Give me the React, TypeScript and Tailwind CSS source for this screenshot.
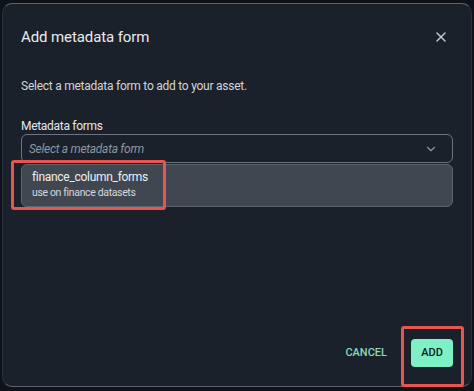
import { X, ChevronDown } from 'lucide-react';

export default function App() {
  return (
    <div className="w-[474px] h-[391px] bg-[#0f1319] pt-[3px] px-[2px] pb-[4px]" style={{ fontFamily: 'Roboto, Lato, sans-serif' }}>
      <div className="h-full rounded-[10px] border border-[#5b6470] border-x-[#2a313b] bg-[#1b212a] flex flex-col px-[18px]">
        {/* Header */}
        <div className="flex items-center justify-between pt-[22px]">
          <h2 className="text-[15px] leading-[22px] tracking-[-0.1px] text-[#e9ebed]">Add metadata form</h2>
          <X size={16} strokeWidth={2} className="text-[#c6cbd1] mr-[4px]" />
        </div>

        <p className="mt-[29px] text-[12px] leading-[18px] tracking-[-0.25px] text-[#d1d5da]">Select a metadata form to add to your asset.</p>

        <div className="mt-[22px]">
          <div className="text-[12px] leading-[18px] tracking-[-0.3px] text-[#e5e7ea]">Metadata forms</div>
          <div className="relative mt-[-1px]">
            <div className="h-[29px] rounded-[6px] border border-[#6b7480] bg-[#1b212a] flex items-center justify-between pl-[7px] pr-[14px]">
              <span className="italic text-[12px] tracking-[-0.3px] text-[#8d96a1]">Select a metadata form</span>
              <ChevronDown size={14} className="text-[#8d96a1]" />
            </div>
            <div className="mt-[1px] h-[43px] rounded-[6px] border border-[#5c6470] bg-[#414750] flex flex-col justify-center pl-[10px] pb-[2px]">
              <span className="text-[12px] leading-[16px] tracking-[-0.3px] text-[#eef0f2]">finance_column_forms</span>
              <span className="text-[10.5px] leading-[15px] tracking-[-0.35px] text-[#d5d9de]">use on finance datasets</span>
            </div>
            <div className="absolute left-[-10px] top-[26px] w-[155px] h-[50px] rounded-[3px] border-[3px] border-[#e8544f]" />
          </div>
        </div>

        <div className="mt-auto flex items-center justify-end gap-[24px] pb-[19px]">
          <span className="text-[11px] font-medium text-[#8ad8c0]">CANCEL</span>
          <div className="relative">
            <div className="h-[28px] w-[42px] rounded-[4px] bg-[#7ef0c6] flex items-center justify-center text-[11px] font-medium text-[#0f1a1a]">ADD</div>
            <div className="absolute left-[-10px] top-[-13px] w-[63px] h-[61px] rounded-[3px] border-[3px] border-[#e8544f]" />
          </div>
        </div>
      </div>
    </div>
  );
}
